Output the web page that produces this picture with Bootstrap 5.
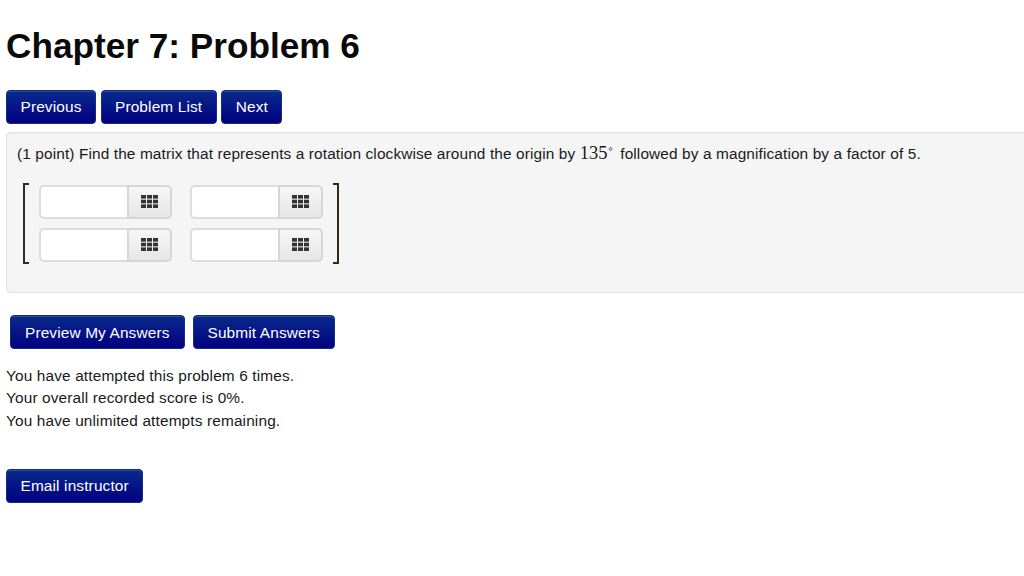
<!DOCTYPE html>
<html lang="en">
<head>
<meta charset="utf-8">
<title>Chapter 7: Problem 6</title>
<link rel="stylesheet" href="https://cdn.jsdelivr.net/npm/bootstrap@5.3.0/dist/css/bootstrap.min.css">
<style>
html, body { overflow: hidden; }
body { font-family: "Liberation Sans", Arial, sans-serif; font-size: 15.4px; letter-spacing: .14px; line-height: 22.4px; color: #1a1a1a; background: #fff; }
.page-wrap { padding: 0 6px; }
.page-title { font-family: "Liberation Sans", Arial, sans-serif; font-weight: 700; font-size: 35.2px; letter-spacing: 0; line-height: 40px; color: #0a0a0a; margin: 26px 0 24px; }
.wk-btn { background-color: #00007f; background-image: linear-gradient(#0a2a8c, #000080); border: 1px solid #10307f; border-radius: 4px; color: #fff; font-size: 15.4px; letter-spacing: .14px; line-height: 21px; padding: 4.5px 13.5px 5.5px; height: 34px; box-shadow: inset 0 1px 0 rgba(255,255,255,.15); }
.wk-btn:hover { color: #fff; background-color: #00007f; }
.nav-btns { gap: 4.5px; margin-bottom: 8px; }
.prob-well { width: calc(100% + 40px); height: 161px; background: #f5f5f5; border: 1px solid #e3e3e3; border-radius: 4px; box-shadow: inset 0 1px 1px rgba(0,0,0,.05); padding: 9px 10px; letter-spacing: .12px; }
.math-num { font-family: "Liberation Serif", serif; font-size: 18.5px; letter-spacing: 0; }
.math-deg { font-family: "DejaVu Sans", sans-serif; font-size: 10px; color: #333; position: relative; top: -7px; margin: 0 2px 0 0; }
.matrix-box { margin: 16px 0 0 6px; width: 318px; height: 81px; }
.matrix-l { width: 6px; height: 81px; border: 2px solid #2b2b2b; border-right: 0; flex: none; }
.matrix-r { width: 6px; height: 81px; border: 2px solid #33290c; border-left: 0; flex: none; }
.matrix-grid { display: grid; grid-template-columns: 134px 134px; grid-auto-rows: 34px; align-content: start; column-gap: 17px; row-gap: 9px; margin: 2px 9px 0 10px; }
.ans-group { height: 34px; flex-wrap: nowrap; }
.input-group > .ans-input { height: 34px; background: #fff; border: 2px solid #ddd; border-right: 0; border-radius: 5px 0 0 5px; padding: 0; width: 89px; flex: none; }
.input-group > .ans-addon { width: 45px; height: 34px; padding: 0; margin-left: 0; display: flex; align-items: center; justify-content: center; background-image: linear-gradient(#f6f6f6, #e6e6e6); border: 2px solid #d6d6d6; border-radius: 0 5px 5px 0; }
.ans-icon { display: block; margin-top: -2px; }
.answer-btns { gap: 8px; margin: 22px 0 0 4px; }
.answer-btns .wk-btn { padding-left: 14px; padding-right: 14px; padding-top: 5px; padding-bottom: 5px; }
.status-lines { margin: 16px 0 0; }
.status-lines div { line-height: 22.4px; }
.email-wrap { margin-top: 37px; }
</style>
</head>
<body>
<svg width="0" height="0" class="d-block position-absolute">
  <symbol id="grid-ico" viewBox="0 0 17 13">
    <g fill="#333">
      <rect x="0" y="0" width="5" height="3.6"/><rect x="6" y="0" width="5" height="3.6"/><rect x="12" y="0" width="5" height="3.6"/>
      <rect x="0" y="4.7" width="5" height="3.6"/><rect x="6" y="4.7" width="5" height="3.6"/><rect x="12" y="4.7" width="5" height="3.6"/>
      <rect x="0" y="9.4" width="5" height="3.6"/><rect x="6" y="9.4" width="5" height="3.6"/><rect x="12" y="9.4" width="5" height="3.6"/>
    </g>
  </symbol>
</svg>
<div class="page-wrap">
  <h1 class="page-title">Chapter 7: Problem 6</h1>
  <div class="d-flex nav-btns">
    <a href="#" class="btn wk-btn">Previous</a>
    <a href="#" class="btn wk-btn">Problem List</a>
    <a href="#" class="btn wk-btn">Next</a>
  </div>
  <div class="prob-well">
    <div>(1 point) Find the matrix that represents a rotation clockwise around the origin by <span class="math-num">135</span><span class="math-deg">∘</span> followed by a magnification by a factor of 5.</div>
    <div class="d-flex matrix-box">
      <div class="matrix-l"></div>
      <div class="matrix-grid">
        <div class="input-group ans-group"><input type="text" class="form-control ans-input" aria-label="Answer 1"><button type="button" class="btn ans-addon" aria-label="Matrix"><svg class="ans-icon" width="17" height="13"><use href="#grid-ico"/></svg></button></div>
        <div class="input-group ans-group"><input type="text" class="form-control ans-input" aria-label="Answer 2"><button type="button" class="btn ans-addon" aria-label="Matrix"><svg class="ans-icon" width="17" height="13"><use href="#grid-ico"/></svg></button></div>
        <div class="input-group ans-group"><input type="text" class="form-control ans-input" aria-label="Answer 3"><button type="button" class="btn ans-addon" aria-label="Matrix"><svg class="ans-icon" width="17" height="13"><use href="#grid-ico"/></svg></button></div>
        <div class="input-group ans-group"><input type="text" class="form-control ans-input" aria-label="Answer 4"><button type="button" class="btn ans-addon" aria-label="Matrix"><svg class="ans-icon" width="17" height="13"><use href="#grid-ico"/></svg></button></div>
      </div>
      <div class="matrix-r"></div>
    </div>
  </div>
  <div class="d-flex answer-btns">
    <button type="button" class="btn wk-btn">Preview My Answers</button>
    <button type="button" class="btn wk-btn">Submit Answers</button>
  </div>
  <div class="status-lines">
    <div>You have attempted this problem 6 times.</div>
    <div>Your overall recorded score is 0%.</div>
    <div>You have unlimited attempts remaining.</div>
  </div>
  <div class="email-wrap"><a href="#" class="btn wk-btn">Email instructor</a></div>
</div>
<script src="https://cdn.jsdelivr.net/npm/bootstrap@5.3.0/dist/js/bootstrap.bundle.min.js"></script>
</body>
</html>
